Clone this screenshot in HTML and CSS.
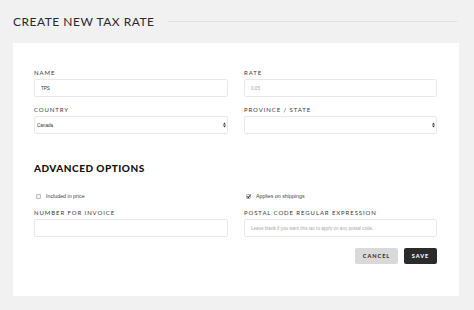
FILE: index.html
```html
<!DOCTYPE html>
<html lang="en">
<head>
    <meta charset="UTF-8">
    <meta name="viewport" content="width=device-width, initial-scale=1.0">
    <title>Create New Tax Rate</title>
    <link rel="stylesheet" href="styles.css">
</head>
<body>
    <header class="page-header">
        <h1>Create new tax rate</h1>
        <span class="header-rule"></span>
    </header>

    <form class="card">
        <div class="form-grid">
            <div class="field">
                <label for="name">Name</label>
                <input id="name" type="text" value="TPS">
            </div>
            <div class="field">
                <label for="rate">Rate</label>
                <input id="rate" type="text" placeholder="0.05">
            </div>
            <div class="field">
                <label for="country">Country</label>
                <div class="select-wrap">
                    <select id="country">
                        <option>Canada</option>
                    </select>
                    <svg class="select-arrows" width="3" height="6" viewBox="0 0 3 6">
                        <path d="M0 2.5 L1.5 0.5 L3 2.5 Z M0 3.5 L1.5 5.5 L3 3.5 Z" fill="#333"/>
                    </svg>
                </div>
            </div>
            <div class="field">
                <label for="province">Province / State</label>
                <div class="select-wrap">
                    <select id="province">
                        <option></option>
                    </select>
                    <svg class="select-arrows" width="3" height="6" viewBox="0 0 3 6">
                        <path d="M0 2.5 L1.5 0.5 L3 2.5 Z M0 3.5 L1.5 5.5 L3 3.5 Z" fill="#333"/>
                    </svg>
                </div>
            </div>
        </div>

        <h2>Advanced options</h2>

        <div class="form-grid">
            <label class="check">
                <input type="checkbox"> Included in price
            </label>
            <label class="check">
                <input type="checkbox" checked> Applies on shippings
            </label>
            <div class="field">
                <label for="invoice">Number for invoice</label>
                <input id="invoice" type="text">
            </div>
            <div class="field">
                <label for="postal">Postal code regular expression</label>
                <input id="postal" type="text" placeholder="Leave blank if you want this tax to apply on any postal code.">
            </div>
        </div>

        <div class="actions">
            <button type="button" class="btn btn-cancel">Cancel</button>
            <button type="submit" class="btn btn-save">Save</button>
        </div>
    </form>
</body>
</html>
```

FILE: styles.css
```css
body {
    margin: 0;
    background-color: #f1f1f1;
    font-family: "Liberation Sans", Arial, sans-serif;
    color: #333;
}

.page-header {
    display: flex;
    align-items: center;
    height: 43px;
    padding: 0 17px 0 13px;
    box-sizing: border-box;
}
.page-header h1 {
    margin: 0;
    font-family: "Lato", sans-serif;
    font-weight: 400;
    font-size: 12px;
    letter-spacing: 0.5px;
    text-transform: uppercase;
    color: #2a2a2a;
}
.header-rule {
    flex: 1;
    height: 1px;
    margin-left: 14px;
    background-color: #e0e0e0;
}

.card {
    width: 446px;
    margin-left: 13px;
    padding: 26px 22px 32px 21px;
    box-sizing: border-box;
    background-color: #fff;
}

.form-grid {
    display: grid;
    grid-template-columns: 194px 193px;
    column-gap: 16px;
    row-gap: 9px;
}

.field label {
    display: block;
    margin-bottom: 2px;
    font-family: "Lato", sans-serif;
    font-size: 6px;
    line-height: 8px;
    letter-spacing: 0.9px;
    text-transform: uppercase;
    color: #3a3a3a;
}
.field input,
.field select {
    display: block;
    width: 100%;
    height: 18px;
    box-sizing: border-box;
    padding: 0 6px;
    border: 1px solid #e8e8e8;
    border-radius: 2px;
    background-color: #fff;
    font-family: "Liberation Sans", Arial, sans-serif;
    font-size: 4.6px;
    color: #333;
    outline: none;
}
.field input::placeholder {
    color: #a8a8a8;
}
.field select {
    padding-left: 2px;
    -webkit-appearance: none;
    appearance: none;
}

.select-wrap {
    position: relative;
}
.select-arrows {
    position: absolute;
    right: 2px;
    top: 6px;
}

h2 {
    margin: 28px 0 17px;
    font-family: "Lato", sans-serif;
    font-weight: 900;
    font-size: 10px;
    line-height: 13px;
    letter-spacing: 0.5px;
    text-transform: uppercase;
    color: #111;
}

.check {
    display: flex;
    align-items: center;
    height: 8px;
    padding-left: 2px;
    font-size: 5.3px;
    color: #444;
}
.check input {
    -webkit-appearance: none;
    appearance: none;
    position: relative;
    width: 5px;
    height: 5px;
    margin: 0 5px 0 0;
    border: 1px solid #bbb;
    border-radius: 1px;
    background-color: #f4f4f4;
}
.check input:checked::after {
    content: "";
    position: absolute;
    left: 1px;
    top: -1px;
    width: 1px;
    height: 3px;
    border: solid #444;
    border-width: 0 1px 1px 0;
    transform: rotate(40deg);
}

.actions {
    display: flex;
    justify-content: flex-end;
    gap: 6px;
    margin-top: 11px;
}
.btn {
    height: 16px;
    padding: 0;
    border: none;
    border-radius: 2px;
    font-family: "Lato", sans-serif;
    font-weight: 900;
    font-size: 5.5px;
    letter-spacing: 1px;
    text-transform: uppercase;
}
.btn-cancel {
    width: 43px;
    background-color: #d9d9d9;
    color: #333;
}
.btn-save {
    width: 33px;
    background-color: #2b2b2b;
    color: #fff;
}
```
